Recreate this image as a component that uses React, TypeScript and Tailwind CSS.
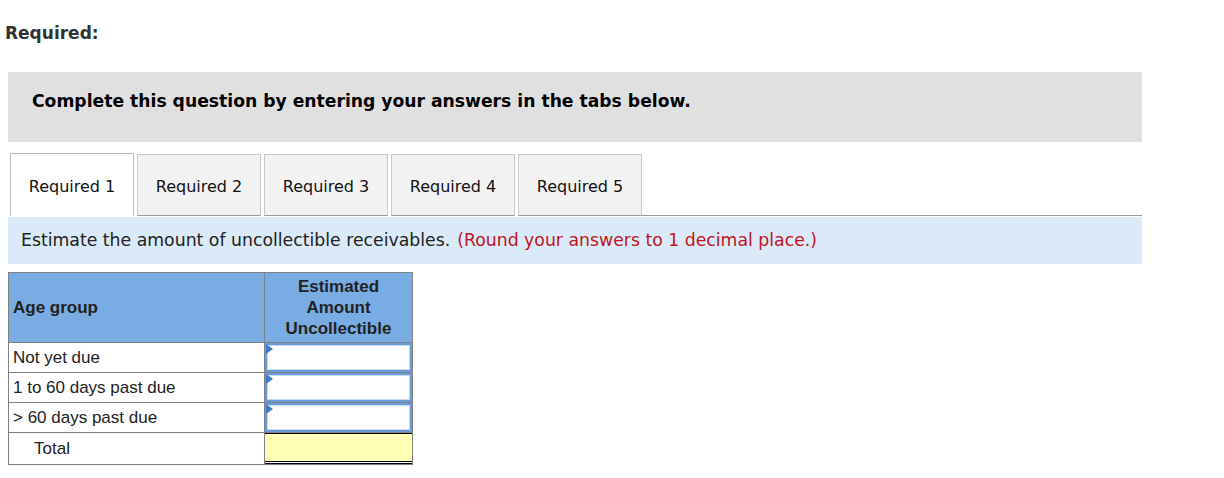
import React from "react";

const verdana = { fontFamily: '"DejaVu Sans", Verdana, sans-serif' };

function InputCell() {
  return (
    <td className="border-l border-[#808080] p-0 align-top">
      <div className="relative h-[29px] border-2 border-[#6a9bd8] bg-white shadow-[inset_0_0_0_1px_#c7dbf3]">
        <div className="absolute left-[-1px] top-[-1px] h-0 w-0 border-y-[5px] border-l-[7px] border-y-transparent border-l-[#3d7cc9]" />
      </div>
    </td>
  );
}

export default function App() {
  const tabs = ["Required 1", "Required 2", "Required 3", "Required 4", "Required 5"];
  const rows = ["Not yet due", "1 to 60 days past due", "> 60 days past due"];
  return (
    <div className="h-[478px] w-[1224px] bg-white text-[#222]">
      <div className="pl-[5px] pt-[21px] text-[17px] font-bold leading-[24px] text-[#333]" style={verdana}>
        Required:
      </div>
      <div className="ml-[8px] mt-[27px] flex h-[70px] w-[1134px] items-start bg-[#e0e0e0] pl-[24px] pt-[18px]">
        <span className="text-[17.2px] font-bold leading-[22px] text-black" style={verdana}>
          Complete this question by entering your answers in the tabs below.
        </span>
      </div>
      <div className="ml-[8px] mt-[11px] w-[1134px]">
        <div className="flex items-end">
          {tabs.map((t, i) => (
            <div key={t} className="flex">
              <div
                className={
                  i === 0
                    ? "ml-[2px] flex h-[63px] w-[124px] items-center justify-center border border-b-0 border-[#b8b8b8] bg-white pt-[3px] text-[16px] text-[#111]"
                    : "ml-[3px] flex h-[62px] w-[124px] items-center justify-center border border-[#c8c8c8] border-b-[#999] bg-[#f2f2f2] pt-[3px] text-[16px] text-[#111]"
                }
                style={verdana}
              >
                {t}
              </div>
            </div>
          ))}
          <div className="h-[1px] flex-1 bg-[#999]" />
        </div>
        <div className="mt-[1px] flex h-[47px] items-center bg-[#dbeaf8] pl-[13px] text-[17.3px]" style={verdana}>
          <span className="text-[#222]">Estimate the amount of uncollectible receivables.</span>
          <span className="ml-[7px] text-[#c0141e]">(Round your answers to 1 decimal place.)</span>
        </div>
        <table
          className="mt-[8px] w-[405px] border-collapse border border-[#808080] text-[17px]"
          style={{ fontFamily: '"Liberation Sans", Arial, sans-serif' }}
        >
          <thead>
            <tr className="h-[70px] bg-[#79ace2]">
              <th className="w-[256px] border border-[#808080] pl-[4px] text-left font-bold text-[#222]">Age group</th>
              <th className="border border-[#808080] px-1 text-center font-bold leading-[21px] text-[#222]">
                Estimated
                <br />
                Amount
                <br />
                Uncollectible
              </th>
            </tr>
          </thead>
          <tbody>
            {rows.map((r) => (
              <tr key={r} className="h-[30px] border-t border-[#808080]">
                <td className="border-r border-[#808080] pl-[4px] text-[#222]">{r}</td>
                <InputCell />
              </tr>
            ))}
            <tr className="h-[31px] border-t border-[#808080]">
              <td className="border-r border-[#808080] pl-[25px] text-[#222]">Total</td>
              <td className="border-l border-[#808080] p-0 align-top">
                <div className="h-[28px] border-t border-black bg-[#ffffb3]" />
                <div className="h-[3px] border-y border-black bg-white" />
              </td>
            </tr>
          </tbody>
        </table>
      </div>
    </div>
  );
}
